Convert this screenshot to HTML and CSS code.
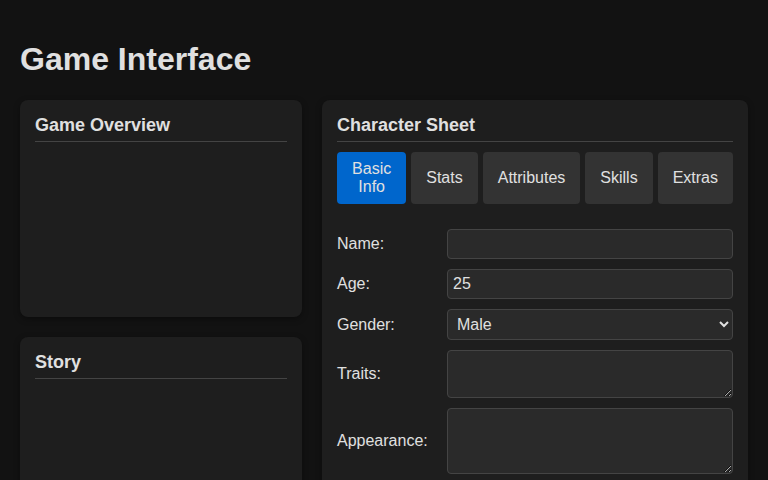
FILE: index.html
```html
<!DOCTYPE html>
<html lang="en">
<head>
<meta charset="utf-8">
<title>Game Interface</title>
<link rel="stylesheet" href="styles.css">
</head>
<body>
<h1 class="page-title">Game Interface</h1>
<div class="layout">
  <div class="col-left">
    <section class="card">
      <h2 class="card-title">Game Overview</h2>
      <div class="card-body"></div>
    </section>
    <section class="card">
      <h2 class="card-title">Story</h2>
      <div class="card-body tall"></div>
    </section>
  </div>
  <section class="card">
    <h2 class="card-title">Character Sheet</h2>
    <div class="tabs">
      <button class="tab active">Basic Info</button>
      <button class="tab">Stats</button>
      <button class="tab">Attributes</button>
      <button class="tab">Skills</button>
      <button class="tab">Extras</button>
    </div>
    <form class="form">
      <div class="row"><label class="lbl">Name:</label><input class="field" type="text"></div>
      <div class="row"><label class="lbl">Age:</label><input class="field" type="number" value="25"></div>
      <div class="row"><label class="lbl">Gender:</label><select class="field sel"><option>Male</option><option>Female</option></select></div>
      <div class="row"><label class="lbl">Traits:</label><textarea class="field" rows="2"></textarea></div>
      <div class="row"><label class="lbl">Appearance:</label><textarea class="field" rows="3"></textarea></div>
    </form>
  </section>
</div>
</body>
</html>
```
FILE: styles.css
```css
html, body {
  margin: 0;
  background: #121212;
  color: #e0e0e0;
  font-family: "Liberation Sans", Arial, sans-serif;
}
body {
  padding: 20px;
}
.page-title {
  font-size: 32px;
  font-weight: bold;
  margin: 21px 0 22px;
  line-height: 37px;
}
.layout {
  display: grid;
  grid-template-columns: 282px 1fr;
  gap: 20px;
  align-items: start;
}
.col-left {
  display: flex;
  flex-direction: column;
  gap: 20px;
}
.card {
  background: #1e1e1e;
  border-radius: 8px;
  padding: 15px;
  box-shadow: 0 2px 6px rgba(0,0,0,0.35);
}
.card-title {
  margin: 0 0 10px;
  font-size: 18px;
  line-height: 21px;
  font-weight: bold;
  padding-bottom: 5px;
  border-bottom: 1px solid #444;
}
.card-body {
  height: 150px;
}
.card-body.tall {
  height: 300px;
}
.tabs {
  display: flex;
  gap: 5px;
  margin-bottom: 25px;
}
.tab {
  background: #333;
  color: #e0e0e0;
  border: none;
  border-radius: 4px;
  padding: 8px 15px;
  font-family: "Liberation Sans", Arial, sans-serif;
  font-size: 16px;
  line-height: 18px;
}
.tab.active {
  background: #0066cc;
}
.form {
  display: flex;
  flex-direction: column;
  gap: 10px;
  padding-bottom: 20px;
}
.row {
  display: flex;
  align-items: center;
}
.lbl {
  width: 110px;
  flex: none;
  font-size: 16px;
}
.field {
  flex: 1;
  min-width: 0;
  background: #2a2a2a;
  color: #e0e0e0;
  border: 1px solid #444;
  border-radius: 4px;
  padding: 5px;
  font-family: "Liberation Sans", Arial, sans-serif;
  font-size: 16px;
  line-height: 18px;
  box-sizing: border-box;
  color-scheme: dark;
}
input.field {
  height: 30px;
}
.sel {
  height: 31px;
}
```
